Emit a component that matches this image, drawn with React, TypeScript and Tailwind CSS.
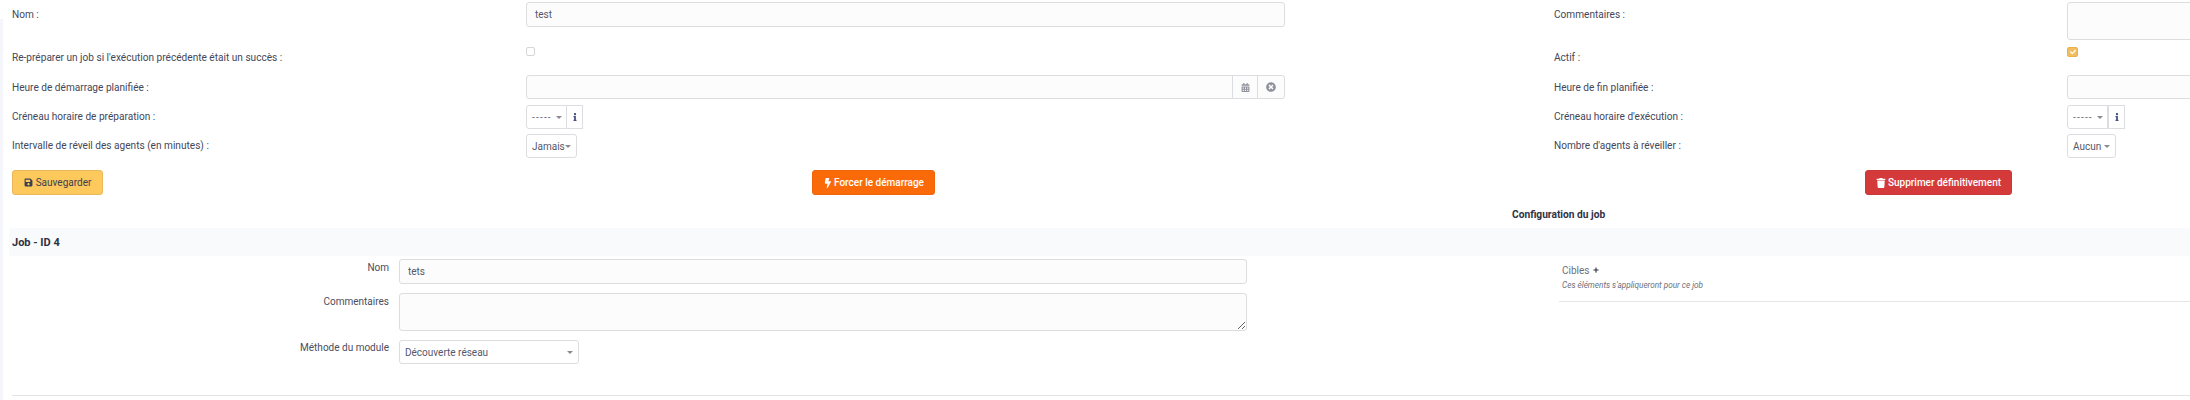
import type { ReactNode } from 'react'
import { FaBolt, FaCalendarAlt, FaCheck, FaInfo, FaPlus, FaSave, FaTimesCircle, FaTrash } from 'react-icons/fa'

const field = 'rounded-[3px] border border-[#dcdde0] bg-[#fcfcfc] text-[10px] text-[#55586a] outline-none'
const formLabel = 'self-start text-right text-[10px] leading-[18px] text-[#4a4d5e]'

function Caret() {
  return <span className="ml-auto h-0 w-0 border-x-[3px] border-t-[3px] border-x-transparent border-t-[#8a8a90]" />
}

function Select({ value, width }: { value: string; width: string }) {
  return (
    <div className={`flex h-[24px] items-center rounded-[3px] border border-[#dcdde0] bg-white pl-[5px] pr-[5px] text-[10px] text-[#55586a] ${width}`}>
      <span>{value}</span>
      <Caret />
    </div>
  )
}

function SlotSelect({ split }: { split?: boolean }) {
  return (
    <div className="flex h-[24px] items-stretch">
      <div className="flex w-[41px] items-center rounded-l-[3px] border border-[#dcdde0] bg-white pl-[5px] pr-[4px] text-[10px] tracking-[1.2px] text-[#6b6e7c]">
        <span>-----</span>
        <Caret />
      </div>
      <div className={`flex items-center justify-center border border-[#dcdde0] bg-white text-[#454f82] ${split ? 'w-[17px]' : 'w-[16px] border-l-0'}`}>
        <FaInfo size={8} />
      </div>
    </div>
  )
}

function Label({ children, top }: { children: ReactNode; top?: boolean }) {
  return (
    <div className={`text-[10.1px] leading-[18px] text-[#44475a] ${top ? 'mt-[4px] self-start' : 'self-center'}`}>
      {children}
    </div>
  )
}

function Button({ icon, text, className }: { icon: ReactNode; text: string; className: string }) {
  return (
    <button className={`flex h-[25px] items-center justify-center rounded-[3px] border text-[10px] ${className}`}>
      {icon}
      {text}
    </button>
  )
}

export default function App() {
  return (
    <div className="flex h-[400px] w-[2190px] overflow-hidden bg-white font-['Roboto',sans-serif]">
      <aside className="mt-[19px] w-[3px] shrink-0 bg-[#f5f6fb]" />

      <main className="min-w-0 flex-1 pl-[9px] pt-[2px]">
        <div className="grid grid-cols-[514px_759px_269px_513px_140px] grid-rows-[38px_25px_25px_24px_24px] gap-y-[5px]">
          <Label top>Nom :</Label>
          <input className={`${field} h-[25px] w-full px-[8px]`} defaultValue="test" />
          <div />
          <Label top>Commentaires :</Label>
          <textarea className={`${field} h-[38px] w-full resize-none`} />

          <Label>Re-préparer un job si l'exécution précédente était un succès :</Label>
          <input type="checkbox" className="mt-[2px] h-[9px] w-[9px] appearance-none self-start rounded-[2px] border border-[#d5d6d9] bg-white" />
          <div />
          <Label>Actif :</Label>
          <div className="mt-[2px] flex h-[10px] w-[11px] items-center justify-center self-start rounded-[2px] border border-[#e8b254] bg-[#f2bd5e] text-white">
            <FaCheck size={6} />
          </div>

          <Label>Heure de démarrage planifiée :</Label>
          <div className={`${field} flex h-[24px] overflow-hidden`}>
            <div className="flex-1" />
            <div className="flex w-[25px] items-center justify-center border-l border-[#dcdde0] text-[#8f929c]">
              <FaCalendarAlt size={9} />
            </div>
            <div className="flex w-[27px] items-center justify-center border-l border-[#dcdde0] text-[#8f929c]">
              <FaTimesCircle size={10} />
            </div>
          </div>
          <div />
          <Label>Heure de fin planifiée :</Label>
          <div className={`${field} h-[24px]`} />

          <Label>Créneau horaire de préparation :</Label>
          <SlotSelect />
          <div />
          <Label>Créneau horaire d'exécution :</Label>
          <SlotSelect split />

          <Label>Intervalle de réveil des agents (en minutes) :</Label>
          <Select value="Jamais" width="w-[51px]" />
          <div />
          <Label>Nombre d'agents à réveiller :</Label>
          <Select value="Aucun" width="w-[49px]" />
        </div>

        <div className="mt-[12px] grid grid-cols-[800px_1053px_1fr]">
          <Button
            className="w-[91px] gap-[3px] border-[#e8b85c] bg-[#fdc85c] text-[#3c3f50]"
            icon={<FaSave size={9} />}
            text="Sauvegarder"
          />
          <Button
            className="w-[123px] gap-[1px] border-[#f0650a] bg-[#fb6a09] font-medium text-white"
            icon={<FaBolt size={10} />}
            text="Forcer le démarrage"
          />
          <Button
            className="w-[147px] gap-[2px] border-[#cc3838] bg-[#d43a3a] font-medium text-white"
            icon={<FaTrash size={10} />}
            text="Supprimer définitivement"
          />
        </div>

        <div className="ml-[1500px] mt-[12px] h-[16px] text-[10.2px] font-bold leading-[16px] text-[#2f3245]">
          Configuration du job
        </div>

        <div className="-ml-[3px] mt-[5px] flex h-[28px] items-center bg-[#f9fafc] pl-[3px] pt-[2px] text-[11px] font-bold text-[#2f3245]">
          Job - ID 4
        </div>

        <div className="mt-[3px] flex">
          <div className="grid grid-cols-[377px_848px] grid-rows-[25px_38px_24px] gap-x-[10px] gap-y-[9px]">
            <div className={formLabel}>Nom</div>
            <input className={`${field} h-[25px] w-full px-[8px]`} defaultValue="tets" />
            <div className={formLabel}>Commentaires</div>
            <textarea className={`${field} h-[38px] w-full`} />
            <div className={`${formLabel} -mt-px`}>Méthode du module</div>
            <Select value="Découverte réseau" width="w-[180px]" />
          </div>

          <div className="ml-[312px] min-w-0 flex-1">
            <div className="mt-[3px] pl-[3px]">
              <div className="flex h-[16px] items-center gap-[4px] text-[10px] text-[#6c707c]">
                Cibles
                <FaPlus size={6} className="text-[#2f3245]" />
              </div>
              <div className="mt-[2px] text-[8.2px] leading-[10px] italic text-[#6c707c]">
                Ces éléments s'appliqueront pour ce job
              </div>
            </div>
            <div className="mt-[11px] border-t border-[#e6e6e8]" />
          </div>
        </div>

        <hr className="mt-[31px] border-[#e4e4e6]" />
      </main>
    </div>
  )
}
